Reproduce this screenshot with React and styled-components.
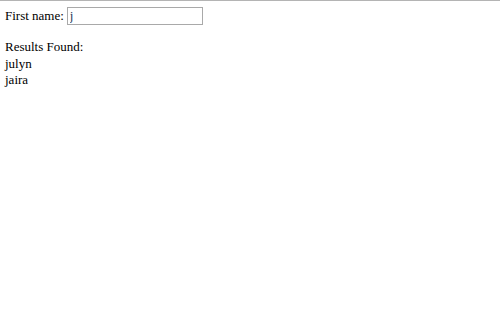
import React, { useState } from "react";
import styled, { createGlobalStyle } from "styled-components";

const GlobalStyle = createGlobalStyle`
  html, body {
    margin: 0;
    padding: 0;
    background: #ffffff;
  }
  body {
    font-family: "Liberation Serif", "Times New Roman", serif;
    font-size: 13px;
    color: #000;
  }
`;

const Page = styled.div`
  border-top: 1px solid #b4b4b4;
  padding: 6px 5px 0 5px;
  min-height: 306px;
`;

const SearchRow = styled.form`
  display: flex;
  align-items: center;
  height: 18px;
  margin: 0;
`;

const Label = styled.label`
  line-height: 16px;
  margin-right: 3px;
`;

const NameInput = styled.input`
  box-sizing: border-box;
  width: 136px;
  height: 18px;
  padding: 0 2px;
  border: 1px solid #a9a9a9;
  border-radius: 0;
  font-family: "Liberation Serif", "Times New Roman", serif;
  font-size: 13px;
  color: #2a3a5a;
  outline: none;
`;

const Results = styled.div`
  margin-top: 14px;
  line-height: 16.5px;
`;

const ResultItem = styled.div``;

const people = ["julyn", "jaira"];

export default function App() {
  const [name, setName] = useState("j");
  const found = people.filter((p) => name && p.startsWith(name));

  return (
    <>
      <GlobalStyle />
      <Page>
        <SearchRow onSubmit={(e) => e.preventDefault()}>
          <Label htmlFor="fname">First name:</Label>
          <NameInput
            id="fname"
            value={name}
            onChange={(e) => setName(e.target.value)}
          />
        </SearchRow>
        <Results>
          <div>Results Found:</div>
          {found.map((p) => (
            <ResultItem key={p}>{p}</ResultItem>
          ))}
        </Results>
      </Page>
    </>
  );
}
